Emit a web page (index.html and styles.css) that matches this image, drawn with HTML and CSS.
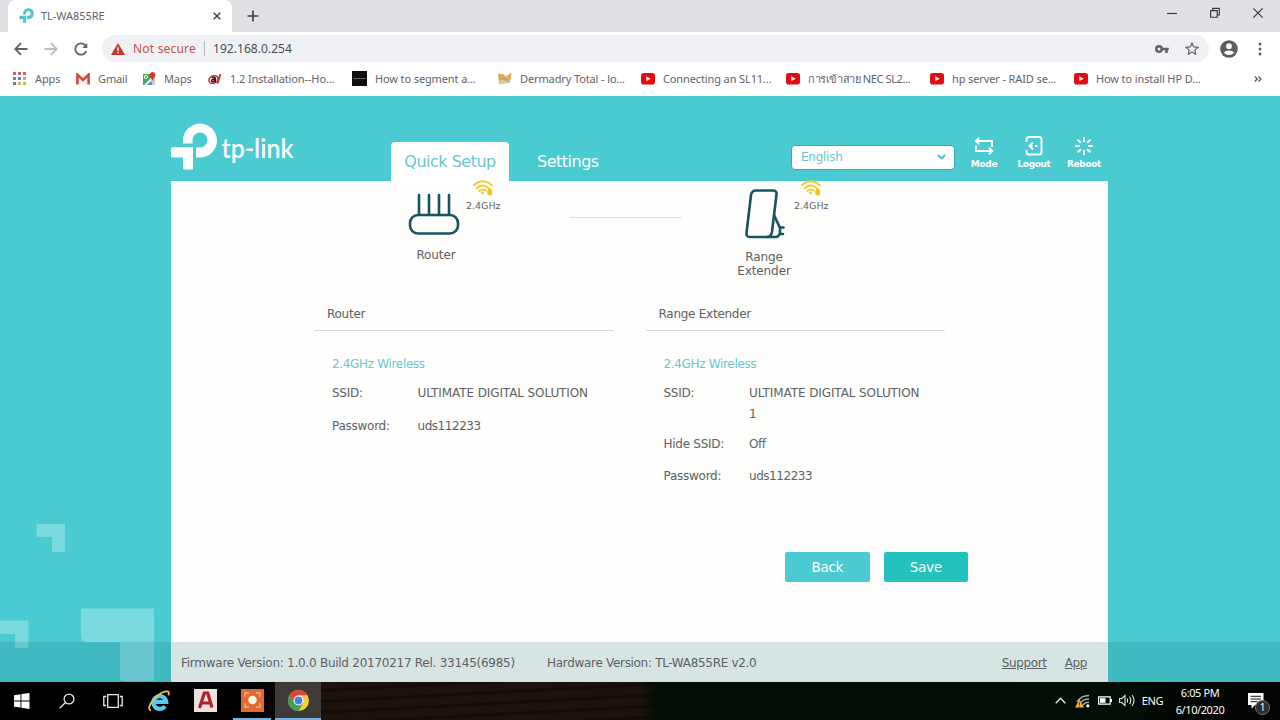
FILE: index.html
```html
<!DOCTYPE html>
<html lang="en">
    <head>
        <meta charset="UTF-8">
        <title>TL-WA855RE</title>
        <link rel="stylesheet" href="styles.css">
    </head>

    <body>
        <!-- shared shapes -->
        <svg class="defs" width="0" height="0">
            <symbol id="tp" viewBox="0 0 46 47">
                <path d="M12 20.500V17A17 17 0 1 1 29 34.500H25V24.500H29A7.500 7.500 0 1 0 21.500 17V20.500Z"/>
                <path d="M1.500 24H22V45.500Q22 46.500 21 46.500H13.500Q12 46.500 12 45V34.500H1.500Q0 34.500 0 33V25.500Q0 24 1.500 24Z"/>
            </symbol>
            <symbol id="yt" viewBox="0 0 14 12">
                <rect width="14" height="11.500" rx="2.800" fill="#e60a10"/>
                <path d="M5.300 3.300 9.600 5.800 5.300 8.300Z" fill="#fff"/>
            </symbol>
            <symbol id="wifi" viewBox="0 0 20 15">
                <g fill="none" stroke="#f2cc2e" stroke-width="1.900">
                    <path d="M.8 5.200Q9.500-2.800 18.800 5.200"/>
                    <path d="M3.700 8.200Q9.500 3 15.500 8"/>
                    <path d="M6.300 10.800Q9.500 8.300 12.500 10.600"/>
                </g>
                <circle cx="9.500" cy="12.700" r="1.500" fill="#f2cc2e"/>
                <path d="M14.300 10h.8V8.800q1.600-1.800 3.200 0V10h.8v5h-4.800z" fill="#f2c21e"/>
            </symbol>
        </svg>

        <div class="tabstrip">
            <div class="tab">
                <svg class="favicon" viewBox="0 0 46 47"><use href="#tp"/></svg>
                <span class="tab_title">TL-WA855RE</span>
                <svg class="tab_close" viewBox="0 0 8 8"><path d="M.7.7l6.600 6.600M7.300.7L.7 7.300"/></svg>
            </div>
            <svg class="new_tab" viewBox="0 0 12 12"><path d="M6 .5v11M.5 6h11"/></svg>
            <div class="window_buttons">
                <svg width="10" height="12" viewBox="0 0 10 12"><path d="M0 6.500h10"/></svg>
                <svg width="10" height="12" viewBox="0 0 10 12"><path d="M.6 3.600h6.600v6.600H.6zM2.700 3.500V1.400h6.600V8H7.300"/></svg>
                <svg width="10" height="12" viewBox="0 0 10 12"><path d="M.4 1.400l9.200 9.200M9.600 1.400L.4 10.600"/></svg>
            </div>
        </div>

        <div class="toolbar">
            <svg class="nav_icon" viewBox="0 0 14 14"><path d="M13.500 7H1.500M7 1.200L1.200 7 7 12.800"/></svg>
            <svg class="nav_icon disabled" viewBox="0 0 14 14"><path d="M.5 7h12M7 1.200L12.800 7 7 12.800"/></svg>
            <svg class="nav_icon" viewBox="0 0 14 14"><path d="M12.300 9.200A5.700 5.700 0 1 1 11.200 3.100L12.500 4.500"/><path d="M13.300 1v5H8.300z" fill="#5f6368" stroke="none"/></svg>
            <div class="omnibox">
                <svg class="warn" viewBox="0 0 14 12"><path d="M7 0l7 12H0z" fill="#c5372c"/><path d="M6.300 4.300h1.400v3.700H6.300zM6.300 9h1.400v1.300H6.300z" fill="#fff"/></svg>
                <span class="not_secure">Not secure</span>
                <span class="url">192.168.0.254</span>
                <svg class="key" viewBox="0 0 14 8"><path d="M4 0a4 4 0 1 1 0 8 4 4 0 1 1 0-8zM4 2.500a1.500 1.500 0 1 0 0 3 1.500 1.500 0 1 0 0-3z" fill-rule="evenodd"/><path d="M7 2.700h6.800v2.600h-1V8h-2.600V5.300H7z"/></svg>
                <svg class="star" viewBox="0 0 14 13"><path d="M7 1l1.700 3.900 4.300.4-3.200 2.800.9 4.200L7 10.100l-3.700 2.200.9-4.200L1 5.300l4.300-.4z"/></svg>
            </div>
            <svg class="avatar" viewBox="0 0 18 18"><circle cx="9" cy="9" r="8.800" fill="#5a5d61"/><circle cx="9" cy="6.200" r="2.900" fill="#fff"/><path d="M3.500 12.600Q9 8.300 14.500 12.600 9 17.600 3.500 12.600z" fill="#fff"/></svg>
            <svg class="more" viewBox="0 0 4 14"><circle cx="2" cy="2" r="1.500"/><circle cx="2" cy="7" r="1.500"/><circle cx="2" cy="12" r="1.500"/></svg>
        </div>

        <div class="bookmarks">
            <span class="bookmark">
                <svg width="14" height="13" viewBox="0 0 14 13"><path d="M0 0h3v3H0zM5 0h3v3H5zM10 0h3v3h-3z" fill="#d65a6a"/><path d="M0 5h3v3H0z" fill="#4c9a76"/><path d="M5 5h3v3H5z" fill="#4a86c8"/><path d="M10 5h3v3h-3zM5 10h3v3H5zM10 10h3v3h-3z" fill="#e0ae48"/><path d="M0 10h3v3H0z" fill="#4c9a56"/></svg>
                <span>Apps</span>
            </span>
            <span class="bookmark">
                <svg width="14" height="12" viewBox="0 0 14 12"><path d="M0 1h14v10H0z" fill="#eee"/><path d="M1.400 11.500V1.700L7 7l5.600-5.300v9.800" fill="none" stroke="#d0473e" stroke-width="2.500"/></svg>
                <span>Gmail</span>
            </span>
            <span class="bookmark">
                <svg width="14" height="14" viewBox="0 0 14 14"><path d="M1 2h12v11H1z" fill="#4aa55a"/><path d="M1 13L8 6l5 7z" fill="#4a86e8"/><path d="M2 13L13 2v3L5 13z" fill="#f5f0d0"/><path d="M8.500 6l4.500-1v8H10z" fill="#c9cdd2"/><path d="M10.500 9Q10 7 8 4.500A2.900 2.900 0 1 1 13 4.500Q11 7 10.500 9z" fill="#d0382e"/><circle cx="4" cy="5" r="1.600" fill="none" stroke="#fff"/></svg>
                <span>Maps</span>
            </span>
            <span class="bookmark">
                <svg width="14" height="12" viewBox="0 0 14 12"><ellipse cx="5.500" cy="6.500" rx="4.800" ry="3.600" transform="rotate(-25 5.500 6.500)" fill="#fff" stroke="#cc2b31" stroke-width="1.500"/><path d="M4 4.500q4-1 3.500 1.500L7 9M7.200 6Q3.500 5.800 3.500 8q1 1.600 3.600-.6" fill="none" stroke="#222" stroke-width="1.600"/><path d="M12.500 1L9.500 10.500" stroke="#cc2b31" stroke-width="1.900"/></svg>
                <span>1.2 Installation--Ho...</span>
            </span>
            <span class="bookmark">
                <svg width="15" height="15" viewBox="0 0 15 15"><path d="M0 0h15v15H0z" fill="#0e0e10"/><path d="M1.500 7.500h12" stroke="#777" stroke-dasharray="2 .5"/></svg>
                <span>How to segment a...</span>
            </span>
            <span class="bookmark">
                <svg width="15" height="13" viewBox="0 0 15 13"><path d="M1 4l13-1-1 8-11 1.500z" fill="#d8c9ac"/><path d="M1 1.500l6 1L8.500 6 13 1l1.500.5L13 8 8 9 1.500 6z" fill="#eba944"/><path d="M2 8l5-2 5 4" fill="none" stroke="#9f9a90"/></svg>
                <span>Dermadry Total - lo...</span>
            </span>
            <span class="bookmark"><svg width="14" height="12"><use href="#yt"/></svg><span>Connecting an SL11...</span></span>
            <span class="bookmark"><svg width="14" height="12"><use href="#yt"/></svg><span class="thai">การเข้าสาย NEC SL2...</span></span>
            <span class="bookmark"><svg width="14" height="12"><use href="#yt"/></svg><span>hp server - RAID se...</span></span>
            <span class="bookmark"><svg width="14" height="12"><use href="#yt"/></svg><span>How to install HP D...</span></span>
            <svg class="overflow" viewBox="0 0 8 6"><path d="M.8.5L3.300 3 .8 5.500M4.500.5L7 3 4.500 5.500"/></svg>
        </div>

        <div class="page">
            <svg class="corners" viewBox="0 0 172 160">
                <path d="M36.500 2H65v28H52V15H38.500Q36.500 15 36.500 13z"/>
                <path d="M0 98.500h28.500V126H15V112H3Q0 112 0 110z"/>
                <path d="M81 86.500h73V159H124Q120 159 120 155V120H87Q81 120 81 114z"/>
            </svg>

            <div class="wrap">
                <div class="header">
                    <svg class="logo" viewBox="0 0 124 48">
                        <use href="#tp" width="46" height="47"/>
                        <text x="50.500" y="35" textLength="72" lengthAdjust="spacingAndGlyphs">tp-link</text>
                    </svg>
                    <ul class="menu">
                        <li><a class="active">Quick Setup</a></li>
                        <li><a>Settings</a></li>
                    </ul>
                    <div class="language">
                        <span>English</span>
                        <svg width="9" height="6" viewBox="0 0 9 6"><path d="M.8 1l3.700 3.500L8.200 1"/></svg>
                    </div>
                    <div class="actions">
                        <a>
                            <svg viewBox="0 0 20 20"><path d="M2 5H18V11M2 9.500V15H17.500M5.200 1.800L2 5l3.200 3.200M15 11.800L18.200 15 15 18.200"/></svg>
                            Mode
                        </a>
                        <a>
                            <svg viewBox="0 0 20 20"><path d="M2.500 6V3.500Q2.500 1 5 1h10q2.500 0 2.500 2.500v12.500q0 2.500-2.500 2.500H5q-2.500 0-2.500-2.500V14"/><path d="M9 6.500L5.500 10 9 13.500M6 10h2.500M11 10h2.500"/></svg>
                            Logout
                        </a>
                        <a>
                            <svg viewBox="0 0 20 20"><path d="M10 1v5M10 14v5M1 10h5M14 10h5M3.600 3.600l3.200 3.200M13.200 13.200l3.200 3.200M16.400 3.600l-3.200 3.200M6.800 13.200l-3.200 3.200"/></svg>
                            Reboot
                        </a>
                    </div>
                </div>

                <div class="content">
                    <div class="devices">
                        <div class="device">
                            <svg class="router_icon" viewBox="0 0 52 43"><rect x="2" y="22" width="48" height="18.500" rx="8"/><path d="M11 21V2M21 21V2M31 21V2M41 21V2"/></svg>
                            <div class="device_name">Router</div>
                            <div class="band"><svg><use href="#wifi"/></svg>2.4GHz</div>
                        </div>
                        <div class="link_line"></div>
                        <div class="device">
                            <svg class="extender_icon" viewBox="0 0 40 50"><path d="M11 1.500h17q4 0 3.500 4L27 43q-1 5-5 5H5q-4 0-3.500-4L6 6q.8-4.500 5-4.500z"/><path d="M29 26l6 13v5q-1 3.500-4 4h-9M35 38.500h3.500M34.500 45H38"/></svg>
                            <div class="device_name">Range<br>Extender</div>
                            <div class="band"><svg><use href="#wifi"/></svg>2.4GHz</div>
                        </div>
                    </div>

                    <div class="summary">
                        <div class="network">
                            <h3>Router</h3>
                            <h4>2.4GHz Wireless</h4>
                            <dl>
                                <dt>SSID:</dt><dd class="ssid">ULTIMATE DIGITAL SOLUTION</dd>
                                <dt>Password:</dt><dd>uds112233</dd>
                            </dl>
                        </div>
                        <div class="network">
                            <h3>Range Extender</h3>
                            <h4>2.4GHz Wireless</h4>
                            <dl>
                                <dt>SSID:</dt><dd class="ssid wrapped">ULTIMATE DIGITAL SOLUTION 1</dd>
                                <dt>Hide SSID:</dt><dd>Off</dd>
                                <dt>Password:</dt><dd>uds112233</dd>
                            </dl>
                        </div>
                    </div>

                    <div class="buttons">
                        <a class="btn">Back</a>
                        <a class="btn save">Save</a>
                    </div>
                </div>
            </div>

            <div class="footer">
                <span class="firmware">Firmware Version: 1.0.0 Build 20170217 Rel. 33145(6985)</span>
                <span class="hardware">Hardware Version: TL-WA855RE v2.0</span>
                <a class="support">Support</a>
                <a>App</a>
            </div>
        </div>

        <div class="taskbar">
            <span class="task"><svg width="16" height="16" viewBox="0 0 16 16"><path d="M0 2.300l6.500-1v6.200H0zM7.400 1.100L15.500 0v7.500H7.400zM0 8.400h6.500v6.200L0 13.700zM7.400 8.400h8.100V16l-8.100-1.200z" fill="#fff"/></svg></span>
            <span class="task"><svg width="16" height="16" viewBox="0 0 16 16" class="line"><circle cx="10" cy="6" r="4.900"/><path d="M6.500 9.500L.7 15.300"/></svg></span>
            <span class="task"><svg width="20" height="14" viewBox="0 0 20 14" class="line"><path d="M4.700.7h10.600v12.600H4.700zM3.200 2.500H.8v9h2.400M16.800 2.500h2.400v9h-2.400"/></svg></span>
            <span class="task"><svg width="22" height="22" viewBox="0 0 22 22"><path d="M6 11.800H18.200A6.400 6.400 0 1 0 17 16.300" fill="none" stroke="#5cc8f2" stroke-width="4.200"/><path d="M3 20.500Q-1.500 19 5 10 14 .3 20 1.500q1.500 1 .3 3.800" fill="none" stroke="#f0c33c" stroke-width="1.800"/></svg></span>
            <span class="task"><svg width="23" height="23" viewBox="0 0 23 23"><path d="M0 0h23v23H0z" fill="#eee2e0"/><path d="M5.500 19L10.300 4h3.400L18 18.500M8 14h8" fill="none" stroke="#b3202c" stroke-width="3.200"/></svg></span>
            <span class="task open"><svg width="23" height="23" viewBox="0 0 23 23"><path d="M0 0h23v23H0z" fill="#e06a2c"/><circle cx="11.500" cy="11" r="4.300" fill="#fff8e8"/><path d="M4 8V4h4M15 4h4v4M19 14v4h-4M8 18H4v-4" fill="none" stroke="#f5b387" stroke-width="1.300"/></svg></span>
            <span class="task open current"><svg width="21" height="21" viewBox="0 0 21 21"><circle cx="10.500" cy="10.500" r="10.500" fill="#f7cb3c"/><path d="M1.400 5.250A10.500 10.500 0 0 1 19.600 5.250H10.500L6 13z" fill="#d9453a"/><path d="M1.400 5.250A10.500 10.500 0 0 0 10.500 21L15 13.100H6z" fill="#3f9f56"/><circle cx="10.500" cy="10.500" r="5" fill="#fff"/><circle cx="10.500" cy="10.500" r="3.900" fill="#4a82dc"/></svg></span>

            <div class="tray">
                <svg width="11" height="7" viewBox="0 0 11 7" class="line"><path d="M.7 6.200L5.500 1.200l4.800 5"/></svg>
                <svg class="net" width="15" height="14" viewBox="0 0 15 14"><g fill="none" stroke="#aaa" stroke-width="1.400"><path d="M2 8Q6 1.500 14 1.500M5 9.500Q8 5 14 5M8 11Q10 8.300 14 8.300"/></g><circle cx="12.800" cy="11.800" r="1.600" fill="#fff"/><path d="M4.500 5.500L9 13.500H0z" fill="#f2b13c"/><path d="M4.500 8.300v2.700M4.500 11.700v1" stroke="#59390a"/></svg>
                <svg class="battery" width="14" height="9" viewBox="0 0 14 9"><path d="M.6.900h11.600v7.200H.6zM13.400 3v3" fill="none" stroke="#fff" stroke-width="1.200"/><path d="M2 2.200h5.500v4.600H2z" fill="#fff"/></svg>
                <svg class="volume line" width="16" height="13" viewBox="0 0 16 13"><path d="M.6 4.500h2.200l3.200-3v10l-3.200-3H.6zM8 4.500q1.300 2 0 4M10.500 2.800q2.500 3.700 0 7.400M13 1q4 5.500 0 11"/></svg>
                <span class="lang">ENG</span>
                <div class="clock">6:05 PM<br>6/10/2020</div>
                <div class="notify">
                    <svg width="16" height="16" viewBox="0 0 16 16"><path d="M0 0h15.500v12H7l-3.500 3.500V12H0z" fill="#fff"/><path d="M2.500 3.300h10.500M2.500 6h10.500M2.500 8.700h7" stroke="#111"/></svg>
                    <span class="count">1</span>
                </div>
            </div>
        </div>
    </body>
</html>
```
FILE: styles.css
```css
* {
    box-sizing: border-box;
}
body {
    display: flex;
    flex-direction: column;
    width: 1280px;
    height: 720px;
    margin: 0;
    overflow: hidden;
    font-family: 'Noto Sans', sans-serif;
    font-size: 11px;
    color: #5f6368;
    background: #fff;
}
svg {
    display: block;
    flex: none;
}
ul, dl, dd, h3, h4 {
    margin: 0;
    padding: 0;
    font-weight: normal;
    list-style: none;
}
.defs {
    position: absolute;
}

/* browser window */
.tabstrip {
    display: flex;
    align-items: center;
    height: 32px;
    padding-left: 8px;
    background: #dee0e4;
}
.tab {
    display: flex;
    align-items: center;
    width: 224px;
    height: 32px;
    padding: 0 0 1px 11px;
    border-radius: 7px 7px 0 0;
    background: #fff;
}
.favicon {
    width: 15px;
    height: 15px;
    fill: #4fc3cf;
}
.tab_title {
    width: 172px;
    padding-left: 7px;
    letter-spacing: -.05px;
}
.tab_close {
    width: 8px;
    height: 8px;
    margin-left: 7px;
    stroke: #444;
    stroke-width: 1.5;
}
.new_tab {
    width: 12px;
    height: 12px;
    margin-left: 15px;
    stroke: #444;
    stroke-width: 1.7;
}
.window_buttons {
    display: flex;
    gap: 33px;
    margin-left: auto;
    padding: 0 17px 6px 0;
    fill: none;
    stroke: #333;
    stroke-width: 1.1;
}
.toolbar {
    display: flex;
    align-items: center;
    height: 32px;
    padding: 1px 18px 0 14px;
}
.nav_icon {
    width: 14px;
    height: 14px;
    margin-right: 16px;
    fill: none;
    stroke: #5f6368;
    stroke-width: 1.8;
}
.nav_icon.disabled {
    stroke: #bbbdc0;
}
.omnibox {
    display: flex;
    align-items: center;
    width: 1107px;
    height: 27px;
    margin-left: -2px;
    padding: 0 10px 0 9px;
    border-radius: 14px;
    background: #f0f1f4;
    font-size: 12px;
}
.warn {
    width: 14px;
    height: 12px;
}
.not_secure {
    width: 72px;
    margin-left: 8px;
    border-right: 1px solid #b5b7ba;
    line-height: 15px;
    color: #c4504a;
    letter-spacing: .2px;
}
.url {
    margin-left: 8px;
    color: #4a4d51;
    letter-spacing: .05px;
}
.key {
    width: 14px;
    height: 8px;
    margin-left: auto;
    margin-right: 16px;
    fill: #5f6368;
}
.star {
    width: 14px;
    height: 13px;
    fill: none;
    stroke: #5f6368;
    stroke-width: 1.2;
}
.avatar {
    width: 18px;
    height: 18px;
    margin-left: 11px;
}
.more {
    width: 4px;
    height: 14px;
    margin-left: auto;
    fill: #5f6368;
}
.bookmarks {
    display: grid;
    grid-template-columns: 63px 66px 66px 144px 145px 144px 145px 144px 144px 144px 1fr;
    align-items: center;
    height: 32px;
    padding: 0 18px 3px 13px;
    white-space: nowrap;
}
.bookmark {
    display: flex;
    align-items: center;
    gap: 8px;
    letter-spacing: -.12px;
}
.thai {
    letter-spacing: -.4px;
}
.overflow {
    width: 8px;
    height: 6px;
    margin-left: auto;
    fill: none;
    stroke: #555;
    stroke-width: 1.3;
}

/* router admin page */
.page {
    position: relative;
    height: 586px;
    font-family: 'DejaVu Sans', sans-serif;
    font-size: 12px;
    color: #5d6162;
    letter-spacing: -.26px;
    background: #4acbd2;
}
.corners {
    position: absolute;
    left: 0;
    bottom: 0;
    width: 172px;
    height: 160px;
    fill: #7bd9e0;
}
.wrap {
    width: 937px;
    margin-left: 171px;
}
.header {
    display: flex;
    height: 85px;
}
.logo {
    width: 124px;
    height: 48px;
    margin-top: 27px;
    fill: #fff;
    font-family: Lato, sans-serif;
    font-size: 26px;
    font-weight: 600;
    letter-spacing: 0;
}
.menu {
    display: flex;
    align-items: flex-end;
    margin-left: 96px;
    font-size: 16px;
    letter-spacing: -.5px;
}
.menu a {
    display: block;
    height: 39px;
    padding: 0 28px;
    line-height: 40px;
    color: #fff;
}
.menu a.active {
    width: 118px;
    padding: 0;
    border-radius: 4px 4px 0 0;
    text-align: center;
    color: #6cc5cc;
    background: #fff;
}
.language {
    display: flex;
    align-items: center;
    justify-content: space-between;
    width: 164px;
    height: 25px;
    margin: 49px 0 0 auto;
    padding: 0 8px 1px 9px;
    border: 1px solid #3ba9b0;
    border-radius: 4px;
    color: #6cc5cc;
    background: #fff;
}
.language span {
    padding-bottom: 1px;
}
.language svg {
    fill: none;
    stroke: #5bb9c0;
    stroke-width: 1.900;
}
.actions {
    display: flex;
    margin: 40px -1px 0 4px;
    font-size: 9px;
    font-weight: bold;
    letter-spacing: -.35px;
    color: #fff;
}
.actions a {
    display: flex;
    flex-direction: column;
    align-items: center;
    gap: 3px;
    width: 50px;
}
.actions svg {
    width: 20px;
    height: 20px;
    fill: none;
    stroke: #fff;
    stroke-width: 2;
}
.content {
    height: 501px;
    background: #fefefc;
}
.devices {
    display: flex;
    height: 116px;
    padding-left: 215px;
}
.device {
    position: relative;
    width: 100px;
    text-align: center;
}
.device svg {
    fill: none;
    stroke: #17545f;
    stroke-width: 2.600;
    stroke-linecap: round;
    stroke-linejoin: round;
}
.router_icon {
    width: 52px;
    height: 43px;
    margin: 12px 0 0 22px;
}
.extender_icon {
    width: 40px;
    height: 50px;
    margin: 8px 0 0 31px;
}
.device_name {
    margin-top: 12px;
    line-height: 14px;
    letter-spacing: -.1px;
}
.extender_icon + .device_name {
    margin-top: 11px;
}
/* signal badge beside the device */
.band {
    position: absolute;
    top: -1px;
    left: 80px;
    font-size: 9.500px;
    line-height: 14px;
    letter-spacing: 0;
}
.band svg {
    width: 20px;
    height: 15px;
    margin: 0 auto 4px;
    stroke: none;
}
.link_line {
    width: 112px;
    height: 1px;
    margin: 36px 32px 0 84px;
    background: #d9dbe0;
}
.summary {
    display: flex;
    gap: 32px;
    height: 255px;
    padding-left: 143px;
}
.network {
    width: 299.500px;
}
.network h3 {
    height: 34px;
    padding-left: 13px;
    border-bottom: 1px solid #d9dbda;
    font-size: 12px;
    line-height: 34px;
}
.network h4 {
    margin: 24px 0 10px 18px;
    font-size: 12px;
    line-height: 18px;
    letter-spacing: -.33px;
    color: #6cc5cc;
}
.network dl {
    display: grid;
    grid-template-columns: 85.500px 180px;
    row-gap: 12px;
    margin-left: 18px;
    line-height: 20.500px;
}
.network dd {
    letter-spacing: -.45px;
}
.network dd.ssid {
    letter-spacing: -.1px;
}
.network dd.wrapped {
    margin-bottom: -2.500px;
}
.buttons {
    display: flex;
    gap: 14px;
    padding-left: 614px;
}
.btn {
    width: 84.500px;
    height: 30px;
    border-radius: 2px;
    font-size: 13.500px;
    line-height: 30px;
    text-align: center;
    color: #fff;
    background: #4acbd2;
}
.btn.save {
    background: #24c2bd;
}
/* translucent strip over the page bottom */
.footer {
    position: absolute;
    right: 0;
    bottom: 0;
    left: 0;
    display: flex;
    align-items: center;
    height: 40px;
    padding: 2px 193px 0 181px;
    background: rgba(20, 100, 110, .17);
}
.firmware {
    width: 366px;
}
.hardware {
    letter-spacing: -.31px;
}
.support {
    margin-left: auto;
    margin-right: 18px;
}
.footer a {
    text-decoration: underline;
    letter-spacing: -.36px;
}

/* taskbar */
.taskbar {
    display: flex;
    height: 38px;
    color: #fff;
    background:
        repeating-linear-gradient(177deg, transparent 0 6px, rgba(0, 0, 0, .35) 8px 9px, transparent 11px) 321px 0 / 332px 38px no-repeat,
        linear-gradient(90deg, #000 250px, #1c140c 325px, #1d130b 640px, #020d05 656px, #020f05 1100px, #030503 1200px);
}
.task {
    display: flex;
    align-items: center;
    justify-content: center;
    width: 46px;
    padding-bottom: 1px;
}
.task:first-child {
    width: 44px;
}
.line {
    fill: none;
    stroke: #e8e8e8;
    stroke-width: 1.3;
}
.task.open {
    width: 38px;
    margin: 0 4px 0 5px;
    padding-bottom: 0;
    border-bottom: 2px solid #78b1df;
}
.task.current {
    width: 46px;
    margin: 0;
    background: #3d3a37;
}
.tray {
    display: flex;
    align-items: center;
    margin-left: auto;
    padding: 0 16px 1px 0;
    font-size: 11px;
}
.tray > svg:first-child {
    margin-right: -1px;
}
.net {
    margin-left: 10px;
}
.battery {
    margin-left: 8px;
}
.volume {
    margin-left: 7px;
    stroke-width: 1.1;
}
.lang {
    width: 34px;
    margin-left: 1px;
    text-align: right;
    letter-spacing: -.4px;
}
.clock {
    width: 50px;
    margin: 0 5px 0 12px;
    line-height: 17px;
    letter-spacing: -.4px;
    text-align: center;
    white-space: nowrap;
}
.notify {
    position: relative;
    margin-left: 11px;
}
.lang, .clock {
    transform: translateX(-7px);
}
.count {
    position: absolute;
    top: 7px;
    left: 7px;
    width: 15px;
    height: 15px;
    border: 1px solid #777;
    border-radius: 50%;
    font-size: 10px;
    line-height: 13px;
    text-align: center;
    background: #2c2c2c;
}
```
